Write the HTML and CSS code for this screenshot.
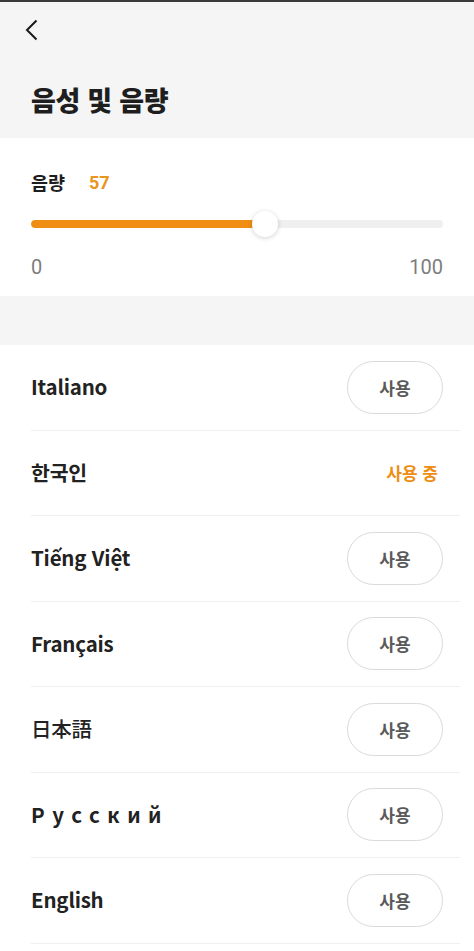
FILE: index.html
```html
<!DOCTYPE html>
<html lang="ko">
<head>
<meta charset="utf-8">
<title>음성 및 음량</title>
<link rel="stylesheet" href="styles.css">
</head>
<body>
<div class="screen">
  <header class="header">
    <button class="back" aria-label="뒤로">
      <svg width="14" height="22" viewBox="0 0 14 22"><path d="M11.5 1.5 L2 11 L11.5 20.5" fill="none" stroke="#1a1a1a" stroke-width="2"/></svg>
    </button>
    <h1 class="title">음성 및 음량</h1>
  </header>

  <section class="volume">
    <div class="vol-head">
      <span class="vol-label">음량</span>
      <span class="vol-value">57</span>
    </div>
    <div class="slider">
      <div class="track">
        <div class="fill" style="width:57%"></div>
      </div>
      <div class="thumb" style="left:57%"></div>
    </div>
    <div class="range">
      <span>0</span>
      <span>100</span>
    </div>
  </section>

  <div class="gap"></div>

  <ul class="langs">
    <li class="row"><span class="name">Italiano</span><button class="use">사용</button></li>
    <li class="row"><span class="name">한국인</span><span class="active">사용 중</span></li>
    <li class="row"><span class="name">Tiếng Việt</span><button class="use">사용</button></li>
    <li class="row"><span class="name">Français</span><button class="use">사용</button></li>
    <li class="row"><span class="name name-jp">日本語</span><button class="use">사용</button></li>
    <li class="row"><span class="name name-ru">Русский</span><button class="use">사용</button></li>
    <li class="row"><span class="name">English</span><button class="use">사용</button></li>
  </ul>
</div>
</body>
</html>
```

FILE: styles.css
```css
* { box-sizing: border-box; }
html, body {
  margin: 0;
  padding: 0;
  background: #ffffff;
}
body {
  font-family: "Noto Sans CJK KR", "Noto Sans", sans-serif;
  color: #222222;
}
.screen {
  width: 474px;
  min-height: 951px;
  border-top: 2px solid #3a3a3a;
  background: #ffffff;
}
.header {
  background: #f5f5f5;
  height: 136px;
  padding: 16px 0 0 20px;
  display: flex;
  flex-direction: column;
}
.back {
  border: 0;
  background: none;
  padding: 0 0 0 5px;
  width: 24px;
  height: 24px;
  display: flex;
  align-items: center;
  cursor: pointer;
}
.title {
  margin: 40px 0 0 11px;
  font-size: 27px;
  line-height: 36px;
  font-weight: 900;
  color: #1e1e1e;
  letter-spacing: -0.3px;
}
.volume {
  padding: 32px 31px 17px;
}
.vol-head {
  display: flex;
  align-items: center;
  height: 24px;
  gap: 24px;
}
.vol-label {
  font-size: 18.5px;
  font-weight: 700;
  color: #1e1e1e;
}
.vol-value {
  font-family: Roboto, "Noto Sans", sans-serif;
  font-size: 18px;
  font-weight: 700;
  color: #e8961e;
}
.slider {
  position: relative;
  height: 26px;
  margin-top: 17px;
  display: flex;
  align-items: center;
}
.track {
  width: 100%;
  height: 8px;
  border-radius: 4px;
  background: #efefef;
  overflow: hidden;
}
.fill {
  height: 100%;
  background: #ef8e12;
  border-radius: 4px 0 0 4px;
}
.thumb {
  position: absolute;
  top: 0;
  width: 26px;
  height: 26px;
  margin-left: -14px;
  border-radius: 50%;
  background: #ffffff;
  box-shadow: 0 1px 5px rgba(0, 0, 0, 0.18);
}
.range {
  margin-top: 18px;
  height: 24px;
  display: flex;
  justify-content: space-between;
  align-items: center;
  font-family: Roboto, "Noto Sans", sans-serif;
  font-size: 20px;
  color: #7d7d7d;
}
.gap {
  height: 49px;
  background: #f5f5f5;
}
.langs {
  list-style: none;
  margin: 0 14px 0 31px;
  padding: 0;
}
.row {
  height: 85.5px;
  border-bottom: 1px solid #efefef;
  display: flex;
  align-items: center;
  justify-content: space-between;
  padding-right: 17px;
}
.name {
  font-family: "Noto Sans CJK KR", sans-serif;
  font-size: 20.5px;
  font-weight: 700;
  color: #222222;
  letter-spacing: -0.2px;
  margin-top: -2px;
}
.name-jp {
  font-weight: 500;
}
.name-ru {
  letter-spacing: 7.5px;
}
.use {
  width: 96px;
  height: 53px;
  border: 1px solid #dadada;
  border-radius: 27px;
  background: #ffffff;
  font-family: "Noto Sans CJK KR", sans-serif;
  font-size: 17px;
  font-weight: 700;
  color: #5a5a5a;
  padding: 0;
}
.active {
  font-size: 17px;
  font-weight: 700;
  color: #ee8e12;
  margin-right: 5px;
}
```
